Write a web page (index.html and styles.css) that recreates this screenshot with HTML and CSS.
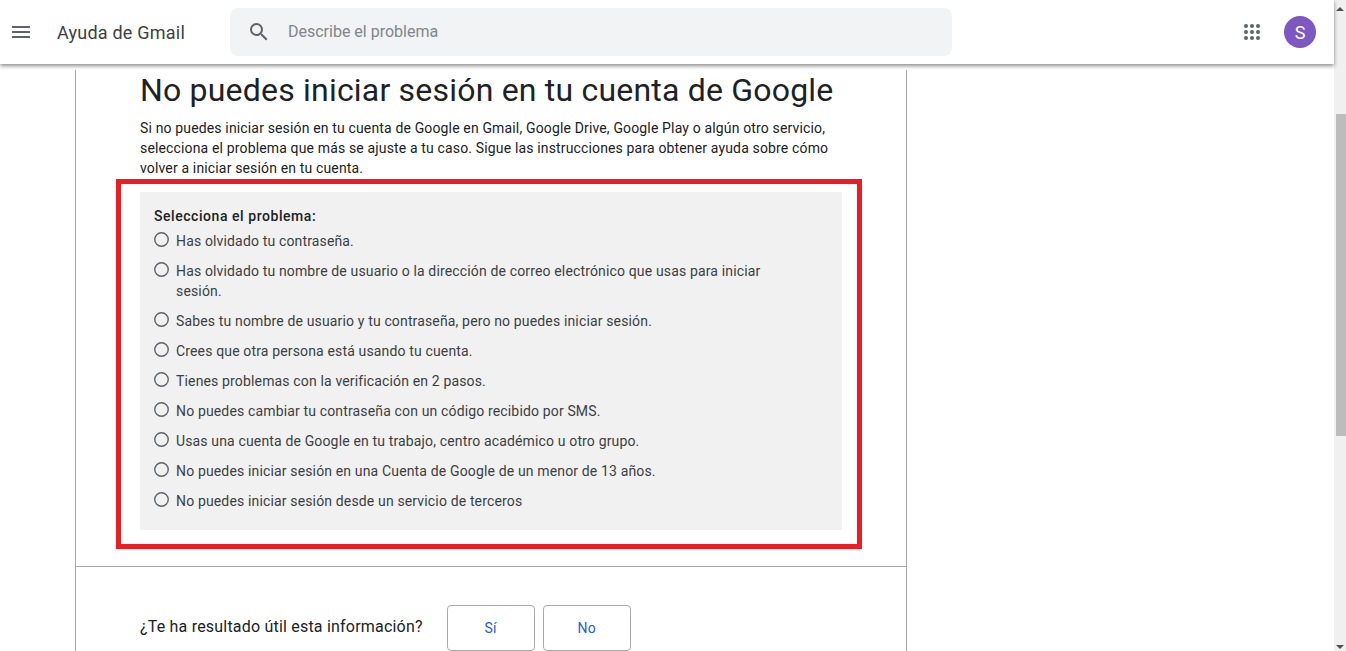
FILE: index.html
```html
<!DOCTYPE html>
<html lang="es">
<head>
<meta charset="utf-8">
<title>Ayuda de Gmail</title>
<link rel="stylesheet" href="styles.css">
</head>
<body>
<svg class="defs" width="0" height="0"><defs><symbol id="radio" viewBox="0 0 15 15"><circle cx="7.5" cy="7.5" r="6.75" fill="none" stroke="#5f6368" stroke-width="1.4"/></symbol></defs></svg>
<div class="page">
  <header class="topbar">
    <svg class="menu-icon" viewBox="0 0 24 24" width="24" height="24"><path d="M3 18h18v-2H3v2zm0-5h18v-2H3v2zm0-7v2h18V6H3z"/></svg>
    <div class="product">Ayuda de Gmail</div>
    <div class="search">
      <svg class="search-icon" viewBox="0 0 24 24" width="24" height="24"><path d="M15.5 14h-.79l-.28-.27A6.47 6.47 0 0 0 16 9.5 6.5 6.5 0 1 0 9.5 16c1.61 0 3.09-.59 4.23-1.57l.27.28v.79l5 4.99L20.49 19l-4.99-5zm-6 0C7.01 14 5 11.99 5 9.5S7.01 5 9.5 5 14 7.01 14 9.5 11.99 14 9.5 14z"/></svg>
      <span class="placeholder">Describe el problema</span>
    </div>
    <svg class="apps-icon" viewBox="0 0 16 16" width="16" height="16"><circle cx="2" cy="2" r="2"/><circle cx="8" cy="2" r="2"/><circle cx="14" cy="2" r="2"/><circle cx="2" cy="8" r="2"/><circle cx="8" cy="8" r="2"/><circle cx="14" cy="8" r="2"/><circle cx="2" cy="14" r="2"/><circle cx="8" cy="14" r="2"/><circle cx="14" cy="14" r="2"/></svg>
    <div class="avatar">S</div>
  </header>
  <main class="main">
    <article class="article">
      <h1 class="title">No puedes iniciar sesión en tu cuenta de Google</h1>
      <p class="intro">Si no puedes iniciar sesión en tu cuenta de Google en Gmail, Google Drive, Google Play o algún otro servicio, selecciona el problema que más se ajuste a tu caso. Sigue las instrucciones para obtener ayuda sobre cómo volver a iniciar sesión en tu cuenta.</p>
      <div class="highlight">
        <section class="panel">
          <div class="panel-title">Selecciona el problema:</div>
          <label class="option"><svg class="radio"><use href="#radio"/></svg><span>Has olvidado tu contraseña.</span></label>
          <label class="option"><svg class="radio"><use href="#radio"/></svg><span>Has olvidado tu nombre de usuario o la dirección de correo electrónico que usas para iniciar sesión.</span></label>
          <label class="option"><svg class="radio"><use href="#radio"/></svg><span>Sabes tu nombre de usuario y tu contraseña, pero no puedes iniciar sesión.</span></label>
          <label class="option"><svg class="radio"><use href="#radio"/></svg><span>Crees que otra persona está usando tu cuenta.</span></label>
          <label class="option"><svg class="radio"><use href="#radio"/></svg><span>Tienes problemas con la verificación en 2 pasos.</span></label>
          <label class="option"><svg class="radio"><use href="#radio"/></svg><span>No puedes cambiar tu contraseña con un código recibido por SMS.</span></label>
          <label class="option"><svg class="radio"><use href="#radio"/></svg><span>Usas una cuenta de Google en tu trabajo, centro académico u otro grupo.</span></label>
          <label class="option"><svg class="radio"><use href="#radio"/></svg><span>No puedes iniciar sesión en una Cuenta de Google de un menor de 13 años.</span></label>
          <label class="option"><svg class="radio"><use href="#radio"/></svg><span>No puedes iniciar sesión desde un servicio de terceros</span></label>
        </section>
      </div>
      <div class="feedback">
        <span class="feedback-label">¿Te ha resultado útil esta información?</span>
        <button class="fb-btn">Sí</button>
        <button class="fb-btn">No</button>
      </div>
    </article>
  </main>
</div>
<div class="scrollbar">
  <div class="arrow-up"></div>
  <div class="track"><div class="thumb"></div></div>
  <div class="arrow-down"></div>
</div>
</body>
</html>
```
FILE: styles.css
```css
* { box-sizing: border-box; }
html, body { height: 100%; }
body {
  margin: 0;
  display: flex;
  overflow: hidden;
  background: #fff;
  color: #202124;
  font-family: Roboto, "Liberation Sans", sans-serif;
}
.defs { position: absolute; }
.page { flex: 1; min-width: 0; display: flex; flex-direction: column; }
.topbar {
  position: relative;
  z-index: 2;
  flex: none;
  height: 64px;
  display: flex;
  align-items: center;
  background: #fff;
  box-shadow: 0 2px 4px rgba(0,0,0,.45);
}
.menu-icon { fill: #5f6368; margin-left: 9px; flex: none; }
.product { margin-left: 24px; width: 173px; font-size: 18px; color: #3c4043; letter-spacing: .22px; flex: none; }
.search {
  width: 722px;
  height: 48px;
  background: #f1f3f4;
  border-radius: 8px;
  display: flex;
  align-items: center;
  padding-left: 17px;
  flex: none;
}
.search-icon { fill: #5f6368; flex: none; }
.placeholder { margin-left: 17px; font-size: 16px; color: #80868b; margin-top: -1px; }
.apps-icon { fill: #5f6368; margin-left: 292px; flex: none; }
.avatar {
  margin-left: 24px;
  width: 32px;
  height: 32px;
  border-radius: 50%;
  background: #7e57c2;
  color: #fff;
  font-size: 18px;
  display: flex;
  align-items: center;
  justify-content: center;
  flex: none;
}
.main { flex: 1; min-height: 0; overflow: hidden; padding-left: 75px; }
.article {
  width: 832px;
  height: 800px;
  border-left: 1px solid #aaa;
  border-right: 1px solid #aaa;
  padding-left: 64px;
}
.title {
  margin: 6px 0 0;
  font-size: 32px;
  line-height: 40px;
  font-weight: 400;
  letter-spacing: .2px;
}
.intro {
  margin: 8px 0 0;
  width: 702px;
  font-size: 14px;
  line-height: 20px;
  letter-spacing: .15px;
}
.highlight {
  margin: 1px 0 0 -24px;
  width: 746px;
  height: 370px;
  border: 5px solid #ed1c24;
  padding: 8px 15px 14px 19px;
}
.panel { background: #f1f1f1; height: 338px; padding: 14px 40px 0 14px; }
.panel-title { font-size: 14px; line-height: 20px; font-weight: 500; letter-spacing: .55px; }
.option {
  display: flex;
  gap: 7px;
  margin-top: 10px;
  font-size: 14px;
  line-height: 20px;
  letter-spacing: .15px;
  color: #3c4043;
}
.panel-title + .option { margin-top: 5px; }
.radio {
  flex: none;
  width: 15px;
  height: 15px;
  margin-top: 1px;
}
.feedback {
  margin: 17px 0 0 -64px;
  width: 830px;
  border-top: 1px solid #aaa;
  padding: 38px 0 0 64px;
  display: flex;
  align-items: center;
  gap: 8px;
}
.feedback-label { font-size: 16px; margin: -4px 16px 0 0; letter-spacing: .2px; }
.fb-btn {
  width: 88px;
  height: 46px;
  padding-bottom: 2px;
  background: #fff;
  border: 1px solid #aaa;
  border-radius: 4px;
  color: #2a5bd7;
  font: 400 14px Roboto, sans-serif;
  letter-spacing: .2px;
}
.scrollbar {
  flex: none;
  width: 12px;
  background: #f0f0f0;
  display: flex;
  flex-direction: column;
  align-items: center;
  position: relative;
}
.arrow-up, .arrow-down { width: 0; height: 0; border-left: 4px solid transparent; border-right: 4px solid transparent; flex: none; }
.arrow-up { border-bottom: 4px solid #505050; margin-top: 7px; }
.arrow-down { border-top: 4px solid #505050; margin-bottom: 2px; }
.track { flex: 1; align-self: stretch; padding: 103px 0 0 2px; }
.thumb { width: 10px; height: 322px; background: #bcbcbc; }
```
